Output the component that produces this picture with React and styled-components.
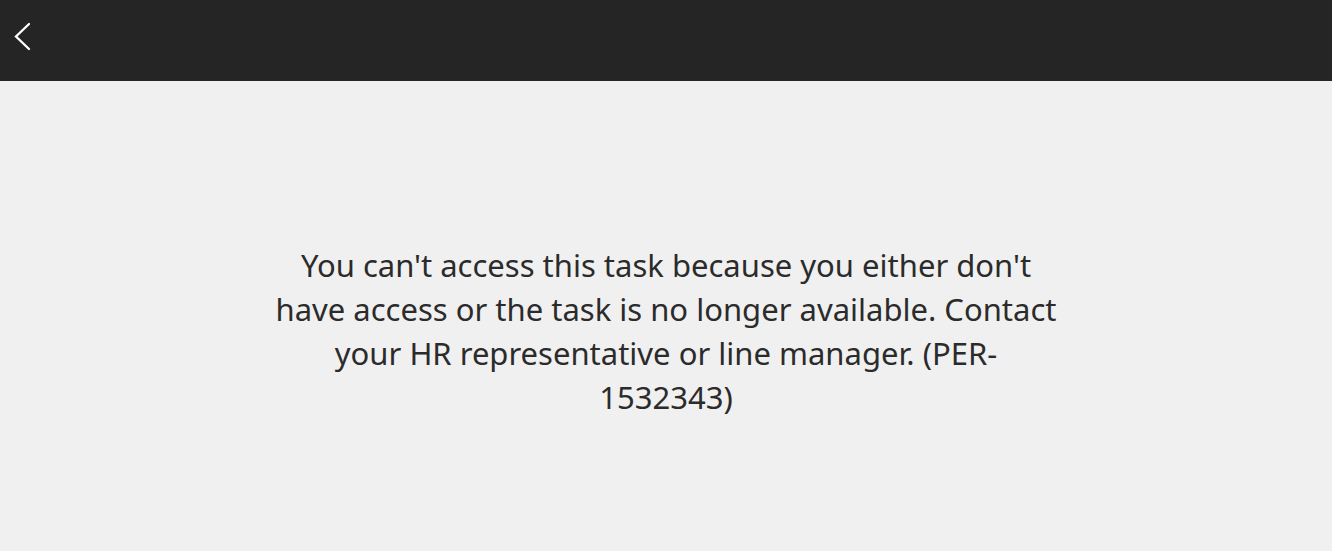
import React from 'react'
import styled, { createGlobalStyle } from 'styled-components'

const GlobalStyle = createGlobalStyle`
    html, body {
        margin: 0;
        padding: 0;
        background: #f0f0f0;
    }
    body {
        font-family: "Noto Sans", "Open Sans", sans-serif;
    }
`

function BackIcon() {
    return (
        <svg width="20" height="32" viewBox="0 0 20 32" fill="none">
            <path d="M16 4 L3 16.5 L16 29" stroke="#ffffff" strokeWidth="2.3" strokeLinecap="round" strokeLinejoin="miter" />
        </svg>
    )
}

function App() {
    return (
        <Page>
            <GlobalStyle />
            <Header>
                <BackButton aria-label="Back">
                    <BackIcon />
                </BackButton>
            </Header>
            <Main>
                <Message>
                    You can't access this task because you either don't have access or the task is no longer available. Contact your HR representative or line manager. (PER-1532343)
                </Message>
            </Main>
        </Page>
    )
}

export default App

const Page = styled.div`
    min-height: 100vh;
    display: flex;
    flex-direction: column;
    background: #f0f0f0;
`
const Header = styled.header`
    height: 81px;
    background: #252525;
    display: flex;
    align-items: center;
    padding: 0 13px;
    box-sizing: border-box;
`
const BackButton = styled.button`
    background: none;
    border: none;
    padding: 0;
    margin-top: -10px;
    display: flex;
    cursor: pointer;
`
const Main = styled.main`
    flex: 1;
    display: flex;
    justify-content: center;
    padding-top: 162px;
`
const Message = styled.p`
    margin: 0;
    max-width: 795px;
    text-align: center;
    font-size: 31px;
    line-height: 44px;
    color: #2b2b2b;
`
